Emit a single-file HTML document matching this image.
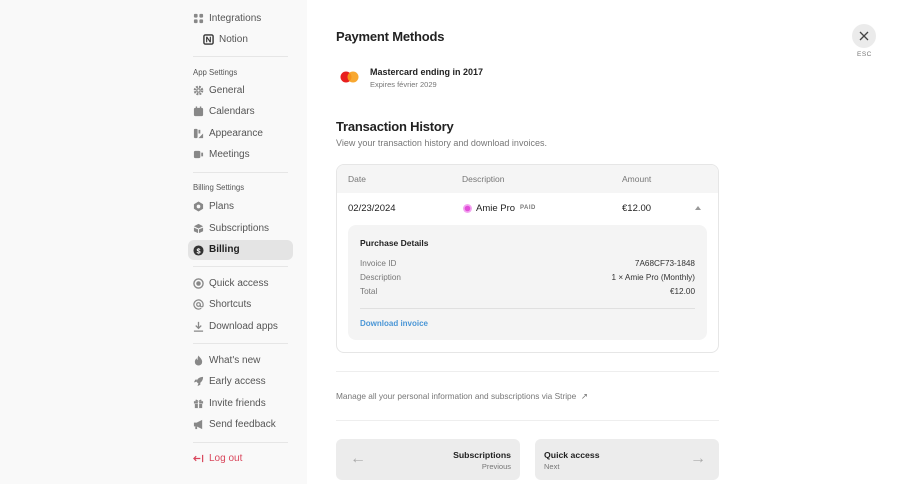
<!DOCTYPE html>
<html><head><meta charset="utf-8"><style>
*{box-sizing:border-box;margin:0;padding:0}
body{width:900px;height:484px;overflow:hidden;font-family:"Liberation Sans",sans-serif;background:#fff;position:relative;color:#222}
#side{position:absolute;left:0;top:0;width:307px;height:484px;background:#f9f9f9}
.it{position:absolute;left:188px;width:105px;height:21px;font-size:10px;color:#555;line-height:21px;padding-left:21px;white-space:nowrap}
.it svg{position:absolute;left:5px;top:5px;width:11px;height:11px}
.sel{background:#e4e4e4;border-radius:6px;color:#222;font-weight:bold}
.lab{position:absolute;left:193px;font-size:7.8px;color:#555;white-space:nowrap}
.dv{position:absolute;left:193px;width:95px;height:1px;background:#e6e6e6}
.a{position:absolute;white-space:nowrap}
.g{color:#777}
</style></head><body>
<div id="side">
<div class="it" style="top:8px"><svg viewBox="0 0 12 12" fill="#888"><rect x="1" y="1" width="4" height="4" rx="1"/><rect x="7" y="1" width="4" height="4" rx="1"/><rect x="1" y="7" width="4" height="4" rx="1"/><rect x="7" y="7" width="4" height="4" rx="1"/></svg>Integrations</div>
<div class="it" style="top:29px;left:198px"><svg viewBox="0 0 12 12"><rect x="1" y="1" width="10" height="10" rx="1.5" fill="none" stroke="#333" stroke-width="1.5"/><path d="M4 3v6M4 3l4 6M8 3v6" stroke="#333" stroke-width="1.2" fill="none"/></svg>Notion</div>
<div class="dv" style="top:56px"></div>
<div class="lab" style="top:68px">App Settings</div>
<div class="it" style="top:80px"><svg viewBox="0 0 12 12"><circle cx="6" cy="6" r="4" fill="none" stroke="#888" stroke-width="2.5" stroke-dasharray="2 1.2"/><circle cx="6" cy="6" r="2.5" fill="#888"/><circle cx="6" cy="6" r="1.2" fill="#f9f9f9"/></svg>General</div>
<div class="it" style="top:101px"><svg viewBox="0 0 12 12" fill="#888"><rect x="1" y="2" width="10" height="9" rx="1.5"/><rect x="3" y="0.5" width="1.5" height="3"/><rect x="7.5" y="0.5" width="1.5" height="3"/></svg>Calendars</div>
<div class="it" style="top:123px"><svg viewBox="0 0 12 12" fill="#888"><rect x="1" y="1" width="4" height="10" rx="1"/><path d="M6 11l5-5v5z"/><rect x="6" y="2" width="2" height="4"/></svg>Appearance</div>
<div class="it" style="top:144px"><svg viewBox="0 0 12 12" fill="#888"><rect x="1" y="2" width="7" height="8" rx="1.5"/><rect x="9" y="4" width="2" height="4"/></svg>Meetings</div>
<div class="dv" style="top:172px"></div>
<div class="lab" style="top:183px">Billing Settings</div>
<div class="it" style="top:196px"><svg viewBox="0 0 12 12"><path d="M6 .5l5 3v5l-5 3-5-3v-5z" fill="#888"/><circle cx="6" cy="6" r="2" fill="#f9f9f9"/></svg>Plans</div>
<div class="it" style="top:218px"><svg viewBox="0 0 12 12" fill="#888"><path d="M6 1l5 2.5-5 2.5-5-2.5z"/><path d="M1 5l4.5 2v4L1 9zM11 5l-4.5 2v4L11 9z"/></svg>Subscriptions</div>
<div class="it sel" style="top:240px;height:20px;line-height:20px"><svg viewBox="0 0 12 12" style="top:4.5px"><circle cx="6" cy="6" r="5.5" fill="#333"/><text x="6" y="9" font-size="8" text-anchor="middle" fill="#fff" font-family="Liberation Sans" font-weight="bold">$</text></svg>Billing</div>
<div class="dv" style="top:266px"></div>
<div class="it" style="top:273px"><svg viewBox="0 0 12 12"><circle cx="6" cy="6" r="5" fill="none" stroke="#888" stroke-width="1.5"/><circle cx="6" cy="6" r="2.5" fill="#888"/></svg>Quick access</div>
<div class="it" style="top:294px"><svg viewBox="0 0 12 12"><circle cx="6" cy="6" r="2" fill="none" stroke="#888" stroke-width="1.3"/><path d="M8 6v1a1.5 1.5 0 003 0V6a5 5 0 10-2 4" fill="none" stroke="#888" stroke-width="1.3"/></svg>Shortcuts</div>
<div class="it" style="top:316px"><svg viewBox="0 0 12 12" fill="none" stroke="#888" stroke-width="1.4"><path d="M6 1v7M3 5l3 3 3-3M1 11h10"/></svg>Download apps</div>
<div class="dv" style="top:343px"></div>
<div class="it" style="top:350px"><svg viewBox="0 0 12 12"><path d="M6 .5c1 2 4 3.5 4 7a4 4 0 01-8 0c0-2 1-3 2-4 0 1.5 1 2 1 2 0-2 0-3 1-5z" fill="#888"/></svg>What's new</div>
<div class="it" style="top:371px"><svg viewBox="0 0 12 12" fill="#888"><path d="M11 1C7 1 5 3 3.5 6l2.5 2.5C9 7 11 5 11 1zM3 6.5L1 7l1.5-3H5zM5.5 9L5 11l3-1.5V7z"/></svg>Early access</div>
<div class="it" style="top:393px"><svg viewBox="0 0 12 12" fill="#888"><rect x="1" y="3.5" width="10" height="2.5"/><rect x="2" y="6.5" width="8" height="4.5"/><rect x="5.3" y="3.5" width="1.4" height="7.5" fill="#f9f9f9"/><path d="M6 3.5C4 1 2 1.5 3 3.5zM6 3.5C8 1 10 1.5 9 3.5z"/></svg>Invite friends</div>
<div class="it" style="top:414px"><svg viewBox="0 0 12 12" fill="#888"><path d="M1 4h3l6-3v10L4 8H1z"/><rect x="2.5" y="8" width="2" height="3"/></svg>Send feedback</div>
<div class="dv" style="top:442px"></div>
<div class="it" style="top:448px;color:#d9455b"><svg viewBox="0 0 12 12" fill="none" stroke="#d9455b" stroke-width="1.3"><path d="M1 6h7M3.5 3.5L1 6l2.5 2.5M10.5 2v8"/></svg>Log out</div>
</div>

<div class="a" style="left:336px;top:29px;font-size:13px;font-weight:bold;color:#222;letter-spacing:-0.2px">Payment Methods</div>
<svg class="a" style="left:340px;top:71px" width="19" height="12"><circle cx="6" cy="6" r="5.5" fill="#e8201f"/><circle cx="13" cy="6" r="5.5" fill="#f79e1b" opacity=".9"/></svg>
<div class="a" style="left:370px;top:67px;font-size:9px;font-weight:bold">Mastercard ending in 2017</div>
<div class="a g" style="left:370px;top:80px;font-size:7.5px">Expires février 2029</div>
<div class="a" style="left:336px;top:119px;font-size:13px;font-weight:bold;letter-spacing:-0.2px">Transaction History</div>
<div class="a g" style="left:336px;top:138px;font-size:9px">View your transaction history and download invoices.</div>

<div class="a" style="left:336px;top:164px;width:383px;height:189px;border:1px solid #e6e6e6;border-radius:8px;overflow:hidden">
<div style="height:28px;background:#f5f5f5"></div>
</div>
<div class="a g" style="left:348px;top:174px;font-size:8.5px">Date</div>
<div class="a g" style="left:462px;top:174px;font-size:8.5px">Description</div>
<div class="a g" style="left:622px;top:174px;font-size:8.5px">Amount</div>
<div class="a" style="left:348px;top:203px;font-size:9.5px">02/23/2024</div>
<svg class="a" style="left:463px;top:204px" width="9" height="9"><circle cx="4.5" cy="4.5" r="4.5" fill="#f3a6f0"/><circle cx="4.5" cy="4.5" r="2.8" fill="#e24fd9"/></svg>
<div class="a" style="left:476px;top:203px;font-size:9.5px">Amie Pro</div>
<div class="a g" style="left:520px;top:205px;font-size:6px;font-weight:bold;letter-spacing:.5px">PAID</div>
<div class="a" style="left:622px;top:203px;font-size:9.5px">€12.00</div>
<div class="a" style="left:695px;top:206px;width:0;height:0;border-left:3px solid transparent;border-right:3px solid transparent;border-bottom:4px solid #999"></div>
<div class="a" style="left:348px;top:225px;width:359px;height:115px;background:#f4f4f4;border-radius:8px"></div>
<div class="a" style="left:360px;top:238px;font-size:8.5px;font-weight:bold">Purchase Details</div>
<div class="a g" style="left:360px;top:257px;font-size:8.2px;line-height:14px">Invoice ID<br>Description<br>Total</div>
<div class="a" style="right:205px;top:257px;font-size:8.2px;line-height:14px;text-align:right;color:#333">7A68CF73-1848<br>1 × Amie Pro (Monthly)<br>€12.00</div>
<div class="a" style="left:360px;top:308px;width:335px;height:1px;background:#e0e0e0"></div>
<div class="a" style="left:360px;top:319px;font-size:8px;font-weight:bold;color:#4a96d6">Download invoice</div>

<div class="a" style="left:336px;top:371px;width:383px;height:1px;background:#eee"></div>
<div class="a g" style="left:336px;top:391px;font-size:8.3px">Manage all your personal information and subscriptions via Stripe&nbsp; ↗</div>
<div class="a" style="left:336px;top:420px;width:383px;height:1px;background:#eee"></div>

<div class="a" style="left:336px;top:439px;width:184px;height:41px;background:#ececec;border-radius:6px"></div>
<div class="a" style="left:350px;top:450px;font-size:16px;color:#aaa">←</div>
<div class="a" style="right:389px;top:450px;font-size:8.7px;font-weight:bold;text-align:right">Subscriptions</div>
<div class="a g" style="right:389px;top:462px;font-size:7.5px">Previous</div>
<div class="a" style="left:535px;top:439px;width:184px;height:41px;background:#ececec;border-radius:6px"></div>
<div class="a" style="left:544px;top:450px;font-size:8.7px;font-weight:bold">Quick access</div>
<div class="a g" style="left:544px;top:462px;font-size:7.5px">Next</div>
<div class="a" style="left:690px;top:450px;font-size:16px;color:#aaa">→</div>

<div class="a" style="left:852px;top:24px;width:24px;height:24px;border-radius:50%;background:#ebebeb"></div>
<svg class="a" style="left:859px;top:31px" width="10" height="10"><path d="M1 1l8 8M9 1L1 9" stroke="#444" stroke-width="1.3"/></svg>
<div class="a g" style="left:857px;top:51px;font-size:6.5px;letter-spacing:.5px">ESC</div>
</body></html>
